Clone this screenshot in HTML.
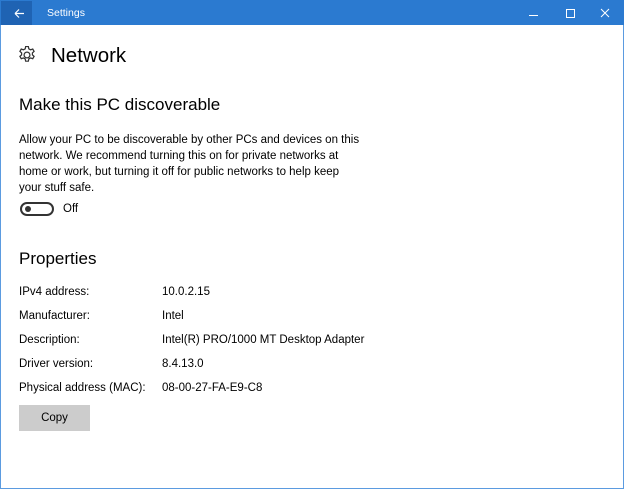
<!DOCTYPE html>
<html><head><meta charset="utf-8"><style>
*{margin:0;padding:0;box-sizing:border-box}
body{width:624px;height:489px;overflow:hidden;background:#fff;font-family:"Liberation Sans",sans-serif;color:#000;position:relative}
.win{position:absolute;left:0;top:0;width:624px;height:489px;border:1px solid #5b9be0;border-top:none}
.tb{position:absolute;left:0;top:0;width:624px;height:25px;background:#2b7ad0;color:#fff}
.back{position:absolute;left:1px;top:1px;width:31px;height:24px;background:#1f63b3}
.tt{position:absolute;left:47px;top:7px;font-size:10.5px}
.p{position:absolute;left:19px}
.t{font-size:11.5px}
</style></head><body>
<div class="win"></div>
<div class="tb">
<div class="back"><svg width="31" height="24"><path d="M14 12.5h9M14 12.5l4-4M14 12.5l4 4" stroke="#fff" stroke-width="1.2" fill="none"/></svg></div>
<div class="tt">Settings</div>
<svg style="position:absolute;left:0;top:0" width="624" height="25"><path d="M529 15.5h9" stroke="#fff"/><rect x="566.5" y="9.5" width="8" height="8" stroke="#fff" fill="none"/><path d="M601 9l8 8M609 9l-8 8" stroke="#fff" stroke-width="1"/></svg>
</div>
<svg class="p" style="left:18px;top:46px" width="18" height="18" viewBox="1 1 16 16"><g fill="none" stroke="#333" stroke-width="1.1"><circle cx="9" cy="9" r="2.6"/><path d="M7.8 1.5h2.4l.4 2 1.6.9 1.9-.7 1.2 2.1-1.5 1.3v1.8l1.5 1.3-1.2 2.1-1.9-.7-1.6.9-.4 2H7.8l-.4-2-1.6-.9-1.9.7-1.2-2.1 1.5-1.3V7.1L2.7 5.8l1.2-2.1 1.9.7 1.6-.9z"/></g></svg>
<div class="p" style="left:51px;top:44px;font-size:20.5px">Network</div>
<div class="p" style="top:95px;font-size:17px">Make this PC discoverable</div>
<div class="p t" style="top:132px;line-height:16px;width:400px;white-space:nowrap">Allow your PC to be discoverable by other PCs and devices on this<br>network. We recommend turning this on for private networks at<br>home or work, but turning it off for public networks to help keep<br>your stuff safe.</div>
<div class="p" style="left:20px;top:202px;width:34px;height:14px;border:2px solid #333;border-radius:7px"><div style="position:absolute;left:3px;top:2px;width:6px;height:6px;border-radius:50%;background:#333"></div></div>
<div class="p t" style="left:63px;top:203px">Off</div>
<div class="p" style="top:249px;font-size:17px">Properties</div>
<div class="t">
<div class="p" style="top:286px">IPv4 address:</div><div class="p" style="left:162px;top:286px">10.0.2.15</div>
<div class="p" style="top:310px">Manufacturer:</div><div class="p" style="left:162px;top:310px">Intel</div>
<div class="p" style="top:334px">Description:</div><div class="p" style="left:162px;top:334px">Intel(R) PRO/1000 MT Desktop Adapter</div>
<div class="p" style="top:358px">Driver version:</div><div class="p" style="left:162px;top:358px">8.4.13.0</div>
<div class="p" style="top:382px">Physical address (MAC):</div><div class="p" style="left:162px;top:382px">08-00-27-FA-E9-C8</div>
</div>
<div class="p t" style="top:405px;width:71px;height:26px;background:#ccc;text-align:center;line-height:26px">Copy</div>
</body></html>
